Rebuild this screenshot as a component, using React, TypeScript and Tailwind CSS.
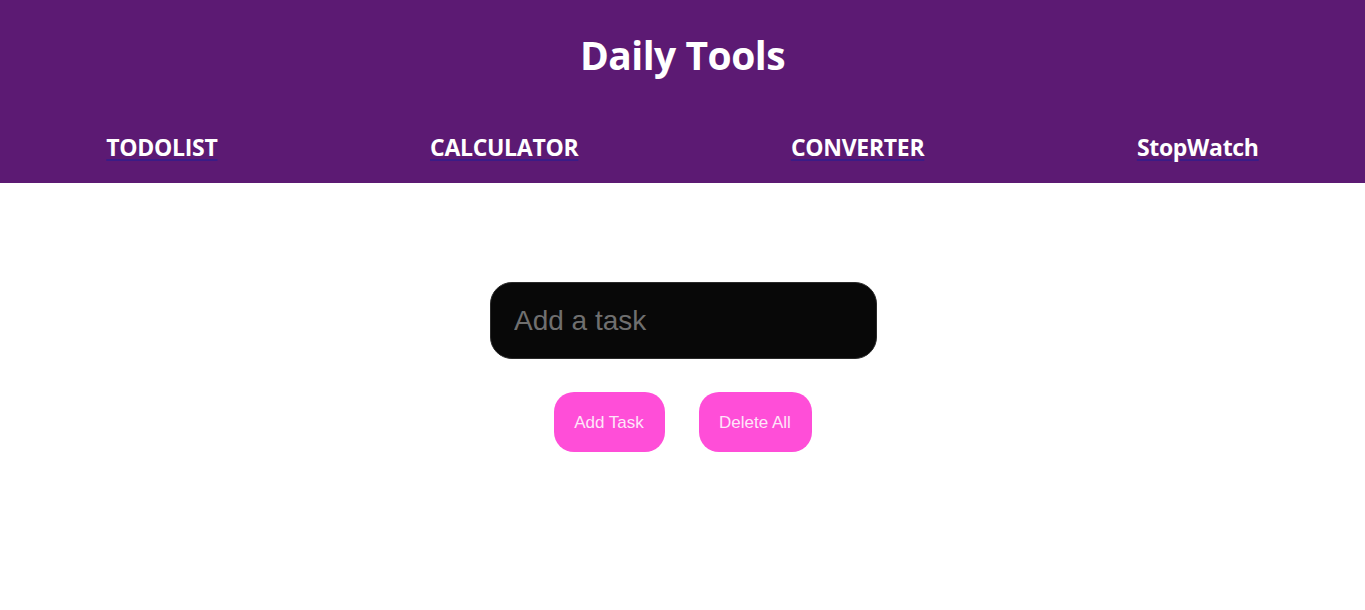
import React from "react";

export default function App() {
  const links = ["TODOLIST", "CALCULATOR", "CONVERTER", "StopWatch"];
  return (
    <div className="min-h-[610px] bg-white">
      <header className="bg-[#5c1a73] h-[183px] flex flex-col font-['Open_Sans',sans-serif]">
        <h1 className="text-center text-white font-bold text-[39px] leading-none pt-[35px] tracking-[-0.5px]">
          Daily Tools
        </h1>
        <nav className="flex justify-around items-center mt-[62px]">
          {links.map((l) => (
            <a
              key={l}
              href="#"
              className="text-white font-bold text-[23px] leading-none underline decoration-[#3a1c86] underline-offset-[3px] tracking-[-0.3px]"
            >
              {l}
            </a>
          ))}
        </nav>
      </header>
      <main className="flex flex-col items-center pt-[99px] font-['Liberation_Sans',Arial,sans-serif]">
        <input
          placeholder="Add a task"
          className="w-[387px] h-[77px] ml-[2px] rounded-[22px] bg-[#080808] border border-[#2a2a2a] pl-[23px] text-[28px] text-[#777] placeholder:text-[#6f6f6f] outline-none"
        />
        <div className="flex gap-[34px] mt-[33px]">
          <button className="h-[60px] w-[111px] rounded-[20px] bg-[#ff4ed8] text-[#fde6f8] text-[17px] pt-[1px]">
            Add Task
          </button>
          <button className="h-[60px] w-[113px] rounded-[20px] bg-[#ff4ed8] text-[#fde6f8] text-[17px] pt-[1px]">
            Delete All
          </button>
        </div>
      </main>
    </div>
  );
}
